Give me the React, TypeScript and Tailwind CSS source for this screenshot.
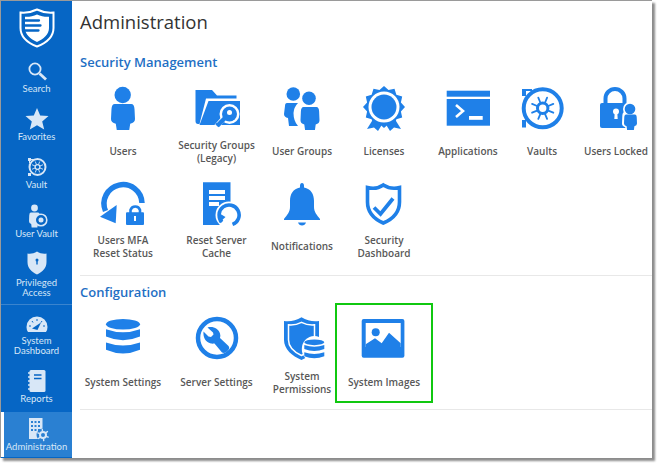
import React from "react";

const B = "#1f80e8";

function personD(x: number, y: number, w: number, h: number) {
  return `M${x + 0.16 * w} ${y}H${x + 0.84 * w}Q${x + 0.97 * w} ${y} ${x + 0.98 * w} ${y + 0.2 * h}L${x + w} ${y + 0.58 * h}Q${x + w} ${y + 0.72 * h} ${x + 0.8 * w} ${y + 0.76 * h}L${x + 0.76 * w} ${y + h}H${x + 0.24 * w}L${x + 0.2 * w} ${y + 0.76 * h}Q${x} ${y + 0.72 * h} ${x} ${y + 0.58 * h}L${x + 0.02 * w} ${y + 0.2 * h}Q${x + 0.03 * w} ${y} ${x + 0.16 * w} ${y}Z`;
}

function starburst(cx: number, cy: number, r1: number, r2: number, n: number) {
  const pts: string[] = [];
  for (let i = 0; i < n * 2; i++) {
    const a = (Math.PI * i) / n - Math.PI / 2;
    const r = i % 2 ? r2 : r1;
    pts.push(`${(cx + r * Math.cos(a)).toFixed(2)},${(cy + r * Math.sin(a)).toFixed(2)}`);
  }
  return pts.join(" ");
}

function Spokes({ cx, cy, r1, r2, n, color, w }: { cx: number; cy: number; r1: number; r2: number; n: number; color: string; w: number }) {
  return (
    <g stroke={color} strokeWidth={w} strokeLinecap="round">
      {Array.from({ length: n }).map((_, i) => {
        const a = (2 * Math.PI * i) / n + Math.PI / 8;
        return (
          <line
            key={i}
            x1={cx + r1 * Math.cos(a)}
            y1={cy + r1 * Math.sin(a)}
            x2={cx + r2 * Math.cos(a)}
            y2={cy + r2 * Math.sin(a)}
          />
        );
      })}
    </g>
  );
}

function Db({ x, y, w, h, color = B }: { x: number; y: number; w: number; h: number; color?: string }) {
  const s = h / 3.6;
  const d = s * 0.26;
  return (
    <g fill={color}>
      <ellipse cx={x + w / 2} cy={y + s / 2} rx={w / 2} ry={s / 2} />
      {[1, 2].map((i) => (
        <path
          key={i}
          d={`M${x} ${y + i * (s + d) - s * 0.28}Q${x + w / 2} ${y + i * (s + d) + s * 0.3} ${x + w} ${y + i * (s + d) - s * 0.28}V${y + i * (s + d) + s * 0.42}Q${x + w / 2} ${y + i * (s + d) + s * 1.12} ${x} ${y + i * (s + d) + s * 0.42}Z`}
        />
      ))}
    </g>
  );
}

const icons: Record<string, React.ReactNode> = {
  users: (
    <g fill={B}>
      <circle cx="23.7" cy="10" r="8.2" />
      <path d={personD(12, 19, 24, 26)} />
    </g>
  ),
  secgroups: (
    <g>
      <path fill={B} d="M2.5 5H19L24 10.5H43.5V13.5H13L6.5 39H5Q2.5 39 2.5 36Z" />
      <path fill={B} d="M15.5 16H47V40H6.5Z" />
      <g stroke="#fff" strokeWidth="5" fill="#fff">
        <circle cx="36.5" cy="29" r="7.5" />
        <path d="M31 33L23 42" />
        <rect x="20" y="40" width="28" height="6" strokeWidth="0" />
      </g>
      <circle cx="36.5" cy="29" r="7.5" fill={B} />
      <path d="M32 33L24.5 40.5" stroke={B} strokeWidth="4.5" />
      <path d="M26 41.5L23 38.5M29.5 38L27 35.5" stroke={B} strokeWidth="2" />
      <circle cx="36.5" cy="27.5" r="2.5" fill="#fff" />
    </g>
  ),
  usergroups: (
    <g fill={B}>
      <circle cx="15.3" cy="9" r="6.8" />
      <path d="M9 18H20Q16 22 15.5 28Q15.5 36 20 41H11L10 33Q6 32 6 29L7 21Q7 18 9 18Z" />
      <circle cx="31" cy="13.3" r="6.8" />
      <path d={personD(22.5, 22, 19, 23)} />
    </g>
  ),
  licenses: (
    <g>
      <path fill={B} d="M12 36L7 44L14 42.5L18 46L23 38H25L30 46L34 42.5L41 44L36 36Z" />
      <polygon fill={B} points={starburst(24, 22, 21, 17.5, 12)} />
      <circle cx="24" cy="22" r="15.5" fill="#fff" />
      <circle cx="24" cy="22" r="12.5" fill={B} />
    </g>
  ),
  apps: (
    <g fill={B}>
      <rect x="2.7" y="5.7" width="43.3" height="6" />
      <rect x="2.7" y="14" width="43.3" height="26.7" />
      <path d="M12 20L19 26L12 32" fill="none" stroke="#fff" strokeWidth="2.6" />
      <rect x="25" y="31" width="13.7" height="3.8" fill="#fff" />
    </g>
  ),
  vaults: (
    <g>
      <path fill={B} d="M4 4H14V6H4ZM4 6H8V11H4ZM4 35H8V42.5H14V42.5H4Z" />
      <circle cx="24.7" cy="23.3" r="19" fill="#fff" stroke={B} strokeWidth="4" />
      <circle cx="24.7" cy="23.3" r="5.2" fill="none" stroke={B} strokeWidth="3" />
      <Spokes cx={24.7} cy={23.3} r1={6} r2={11.5} n={8} color={B} w={1.8} />
    </g>
  ),
  locked: (
    <g>
      <path d="M13.5 19V13.5A9.5 9.5 0 0 1 32.5 13.5V19" fill="none" stroke={B} strokeWidth="4" />
      <rect x="8" y="18" width="28" height="25" rx="2" fill={B} />
      <circle cx="24" cy="26.5" r="3" fill="#fff" />
      <path d="M22.8 27H25.2L25.7 34H22.3Z" fill="#fff" />
      <circle cx="38" cy="24" r="7" fill="#fff" />
      <path d={personD(30, 27, 16, 20)} fill="#fff" />
      <circle cx="38" cy="24" r="5.3" fill={B} />
      <path d={personD(32, 29.5, 13, 15.5)} fill={B} />
    </g>
  ),
  mfa: (
    <g>
      <path d="M6.5 31A19 19 0 1 1 43 23" fill="none" stroke={B} strokeWidth="5.5" />
      <path d="M17.7 25L16.7 43.3L1 36.7Z" fill={B} />
      <path d="M31.5 33V30A5 5 0 0 1 41 30V33" fill="none" stroke={B} strokeWidth="2.6" />
      <rect x="27" y="32.3" width="18" height="12.7" rx="1" fill={B} />
      <rect x="35" y="36" width="2" height="5" fill="#fff" />
    </g>
  ),
  cache: (
    <g>
      <path fill={B} d="M10 2.3H37.5V45H10Z" />
      <g fill="#fff">
        <rect x="16" y="10" width="16" height="4" />
        <rect x="16" y="16" width="16" height="4" />
        <rect x="16" y="22" width="10" height="4" />
      </g>
      <circle cx="36" cy="35" r="13.5" fill="#fff" />
      <path d="M29 42A10 10 0 1 1 39.5 44.4" fill="none" stroke={B} strokeWidth="3.6" />
      <path d="M25 32.5L32.5 37L26 43Z" fill={B} />
    </g>
  ),
  bell: (
    <g fill={B}>
      <path d="M24 3Q26 3 26 6V7.5C33 9 36 14 36 21V27C36 32 39 35 42 39V40H6V39C9 35 12 32 12 27V21C12 14 15 9 22 7.5V6Q22 3 24 3Z" />
      <path d="M20 42.5H28Q27 45.5 24 45.5Q21 45.5 20 42.5Z" />
    </g>
  ),
  shield: (
    <g>
      <path d="M7.5 7.5C13 9 19 8 23.3 5C28 8 34 9 39.5 7.5V22C39.5 32 33 39 23.3 43C14 39 7.5 32 7.5 22Z" fill="none" stroke={B} strokeWidth="3.6" />
      <path d="M14 27.5L20.5 34L33 18.5" fill="none" stroke={B} strokeWidth="3.8" />
    </g>
  ),
  db: <Db x={7} y={3} w={34} h={37.7} />,
  wrench: (
    <g>
      <circle cx="24" cy="22" r="19" fill="none" stroke={B} strokeWidth="4.5" />
      <path
        fill={B}
        d="M14.5 11.5L20 16.5L20.5 18.5L18 21L15.5 20.5L10.5 15.5C10 21 12 26 18 27.5C19.5 27.8 20.5 27.5 21.5 27.5L29 36.5C31.5 37.5 33 36.5 34.5 35L36 33C36.5 31.5 36 30.5 35 29.5L27 22C27.5 20.5 27.5 19 27 17.5C25.5 12.5 20 10 14.5 11.5Z"
      />
    </g>
  ),
  perms: (
    <g>
      <path d="M6 5C12 6 18 4.5 23.5 1.3C29 4.5 35 6 41 5V24C41 33 33 40 23.5 44C14 40 6 33 6 24Z" fill={B} />
      <path d="M10.5 8.8C15 9.3 19.5 8.3 23.5 6.3C27.5 8.3 32 9.3 36.5 8.8V24C36.5 31 30 36.5 23.5 39.5C17 36.5 10.5 31 10.5 24Z" fill="none" stroke="#fff" strokeWidth="1.5" />
      <ellipse cx="36.3" cy="33" rx="12.5" ry="13" fill="#fff" />
      <Db x={26.3} y={23.5} w={20} h={20.5} />
    </g>
  ),
  images: (
    <g>
      <rect x="1.7" y="3" width="42.7" height="38.7" rx="2" fill={B} />
      <rect x="5.7" y="7" width="35" height="24" fill="#fff" />
      <circle cx="15.7" cy="16.3" r="4" fill={B} />
      <path d="M5.7 28.3L15 22.3L21.7 27.3L29 16.7L40.7 27.3V33H5.7Z" fill={B} />
    </g>
  ),
};

const W = "#d8e7f7";
const navIcons: Record<string, React.ReactNode> = {
  search: (
    <g>
      <circle cx="12" cy="12" r="5.6" fill="none" stroke={W} strokeWidth="1.8" />
      <path d="M16.5 16.5L23 22.5" stroke={W} strokeWidth="2.8" />
    </g>
  ),
  star: <polygon fill={W} points="14,3 17.2,10.5 25.5,11 19.2,16.4 21.2,24.5 14,20.2 6.8,24.5 8.8,16.4 2.5,11 10.8,10.5" />,
  vault: (
    <g>
      <path d="M6 6H12V7H6ZM6 7H7V10H6Z" fill={W} />
      <circle cx="14.5" cy="14" r="8" fill="none" stroke={W} strokeWidth="2" />
      <rect x="5" y="5" width="3" height="3" fill={W} />
      <rect x="5" y="20" width="3" height="3" fill={W} />
      <circle cx="14.5" cy="14" r="2.4" fill="none" stroke={W} strokeWidth="1.3" />
      <Spokes cx={14.5} cy={14} r1={3} r2={5.6} n={8} color={W} w={0.9} />
    </g>
  ),
  uservault: (
    <g>
      <circle cx="11.5" cy="6" r="3.4" fill={W} />
      <path d={personD(6, 10.5, 11, 15)} fill={W} />
      <circle cx="18" cy="18" r="5.8" fill="#0666c5" stroke={W} strokeWidth="1.6" />
      <circle cx="18" cy="18" r="2.5" fill={W} />
    </g>
  ),
  priv: (
    <g>
      <path d="M14 2.5C17 4.5 20.5 5 23.5 4.5V13C23.5 19 19.5 23 14 25.5C8.5 23 4.5 19 4.5 13V4.5C7.5 5 11 4.5 14 2.5Z" fill={W} />
      <circle cx="14" cy="11" r="1.5" fill="#0666c5" />
      <rect x="13.3" y="11" width="1.4" height="4.5" fill="#0666c5" />
    </g>
  ),
  dash: (
    <g>
      <path d="M14 5.5A10.5 10.5 0 0 1 24.5 16A9 9 0 0 1 23 21H5A9 9 0 0 1 3.5 16A10.5 10.5 0 0 1 14 5.5Z" fill={W} />
      <path d="M9 17.5L18 11.5L14.5 19Z" fill="#0666c5" />
      <path d="M6 15H8M14 8V10M20 15H22M9 10L10 11.5M19 10L18 11.5" stroke="#0666c5" strokeWidth="1" />
    </g>
  ),
  reports: (
    <g>
      <rect x="6.5" y="3" width="16" height="22" rx="1.5" fill={W} />
      <path d="M5 6H8M5 10H8M5 14H8M5 18H8M5 22H8" stroke={W} strokeWidth="1.4" />
      <path d="M11 8H18.5M11 11.5H18.5" stroke="#0666c5" strokeWidth="1.3" />
    </g>
  ),
  admin: (
    <g>
      <rect x="6" y="3" width="13.5" height="21" fill={W} />
      <g fill="#2a80d2">
        {[6, 10, 14].map((y) =>
          [8, 11.5, 15].map((x) => <rect key={`${x}-${y}`} x={x} y={y} width="2" height="2" />),
        )}
      </g>
      <circle cx="20" cy="20" r="6.5" fill="#2a80d2" />
      <circle cx="20" cy="20" r="3" fill="none" stroke={W} strokeWidth="2" />
      <Spokes cx={20} cy={20} r1={4} r2={5.6} n={6} color={W} w={1.4} />
    </g>
  ),
};

function NavItem({ icon, label, h, active, gap = "-mt-px" }: { icon: string; label: string[]; h: string; active?: boolean; gap?: string }) {
  return (
    <div className={`relative flex flex-col items-center shrink-0 ${h} ${active ? "bg-[#2a80d2] pt-[3px]" : ""}`}>
      {active && <span className="absolute left-0 top-0 bottom-0 w-[3px] bg-white" />}
      <svg width="28" height="28" viewBox="0 0 28 28" className="shrink-0">
        {navIcons[icon]}
      </svg>
      <div className={`text-[9.5px] leading-[10px] text-center text-[#d8e7f7] font-['Lato',sans-serif] whitespace-nowrap ${gap}`}>
        {label.map((l) => (
          <div key={l}>{l}</div>
        ))}
      </div>
    </div>
  );
}

const widths = ["w-[86px]", "w-[101px]", "w-[70px]", "w-[94px]", "w-[74px]", "w-[74px]", "w-[74px]"];

function Tile({ icon, label, col, highlight }: { icon: string; label: string[]; col: number; highlight?: boolean }) {
  return (
    <div className={`relative flex flex-col items-center h-[95px] shrink-0 ${widths[col]}`}>
      {highlight && <span className="absolute -left-0.5 -right-0.5 -top-px -bottom-1 border-2 border-[#10c810]" />}
      <svg width="48" height="48" viewBox="0 0 48 48" className="mt-3 shrink-0">
        {icons[icon]}
      </svg>
      <div className={`h-[34px] flex flex-col justify-center items-center text-[10px] leading-[13px] font-semibold text-[#585858] whitespace-nowrap ${label.length > 1 ? "mt-[2px]" : "mt-px"}`}>
        {label.map((l) => (
          <div key={l}>{l}</div>
        ))}
      </div>
    </div>
  );
}

export default function App() {
  return (
    <div className="w-[662px] h-[468px] bg-white overflow-hidden font-['Open_Sans',sans-serif]">
      <div className="w-[652px] h-[458px] flex border-t border-l border-[#9a9a9a] bg-white shadow-[3px_3px_2px_#8c8c8c]">
        <aside className="w-[71px] shrink-0 bg-[#0666c5] flex flex-col">
          <div className="h-[56px] shrink-0 flex justify-center pt-[7px]">
            <svg width="38" height="42" viewBox="0 0 38 42">
              <path d="M19 1.5C24 4 30 5 35.5 4.5V20C35.5 29 28 35 19 38.5C10 35 2.5 29 2.5 20V4.5C8 5 14 4 19 1.5Z" fill="none" stroke="#fff" strokeWidth="2" />
              <path d="M19 6.5C23 8.5 27 9 31 8.8V20C31 26.5 25.5 31 19 34C12.5 31 7 26.5 7 20V8.8C11 9 15 8.5 19 6.5Z" fill="#fff" />
              <path d="M6 12.5H21M6 17.5H22.5M6 22.5H20.5" stroke="#0666c5" strokeWidth="2.3" strokeLinecap="round" />
            </svg>
          </div>
          <NavItem icon="search" label={["Search"]} h="h-[48px]" />
          <NavItem icon="star" label={["Favorites"]} h="h-[48px]" />
          <NavItem icon="vault" label={["Vault"]} h="h-[49px]" />
          <NavItem icon="uservault" label={["User Vault"]} h="h-[47px]" />
          <NavItem icon="priv" label={["Privileged", "Access"]} h="h-[55px]" gap="mt-px" />
          <div className="h-px bg-[#3a84ce] shrink-0" />
          <div className="h-[6px] shrink-0" />
          <NavItem icon="dash" label={["System", "Dashboard"]} h="h-[56px]" gap="-mt-[3px]" />
          <NavItem icon="reports" label={["Reports"]} h="h-[45px]" />
          <NavItem icon="admin" label={["Administration"]} h="h-[45px]" active />
        </aside>
        <main className="flex-1 min-w-0 pl-2 flex flex-col">
          <h1 className="h-[41px] shrink-0 flex items-center text-[18.5px] font-normal text-[#333333]">Administration</h1>
          <h2 className="mt-[11px] h-[20px] shrink-0 flex items-center text-[13px] font-semibold text-[#1f6fc4]">Security Management</h2>
          <div className="flex">
            <Tile col={0} icon="users" label={["Users"]} />
            <Tile col={1} icon="secgroups" label={["Security Groups", "(Legacy)"]} />
            <Tile col={2} icon="usergroups" label={["User Groups"]} />
            <Tile col={3} icon="licenses" label={["Licenses"]} />
            <Tile col={4} icon="apps" label={["Applications"]} />
            <Tile col={5} icon="vaults" label={["Vaults"]} />
            <Tile col={6} icon="locked" label={["Users Locked"]} />
          </div>
          <div className="flex">
            <Tile col={0} icon="mfa" label={["Users MFA", "Reset Status"]} />
            <Tile col={1} icon="cache" label={["Reset Server", "Cache"]} />
            <Tile col={2} icon="bell" label={["Notifications"]} />
            <Tile col={3} icon="shield" label={["Security", "Dashboard"]} />
          </div>
          <div className="mt-[12px] h-px bg-[#e8e8e8] shrink-0" />
          <h2 className="mt-[7px] h-[20px] shrink-0 flex items-center text-[13px] font-semibold text-[#1f6fc4]">Configuration</h2>
          <div className="flex mt-[1px]">
            <Tile col={0} icon="db" label={["System Settings"]} />
            <Tile col={1} icon="wrench" label={["Server Settings"]} />
            <Tile col={2} icon="perms" label={["System", "Permissions"]} />
            <Tile col={3} icon="images" label={["System Images"]} highlight />
          </div>
          <div className="mt-[10px] h-px bg-[#e8e8e8] shrink-0" />
        </main>
      </div>
    </div>
  );
}
